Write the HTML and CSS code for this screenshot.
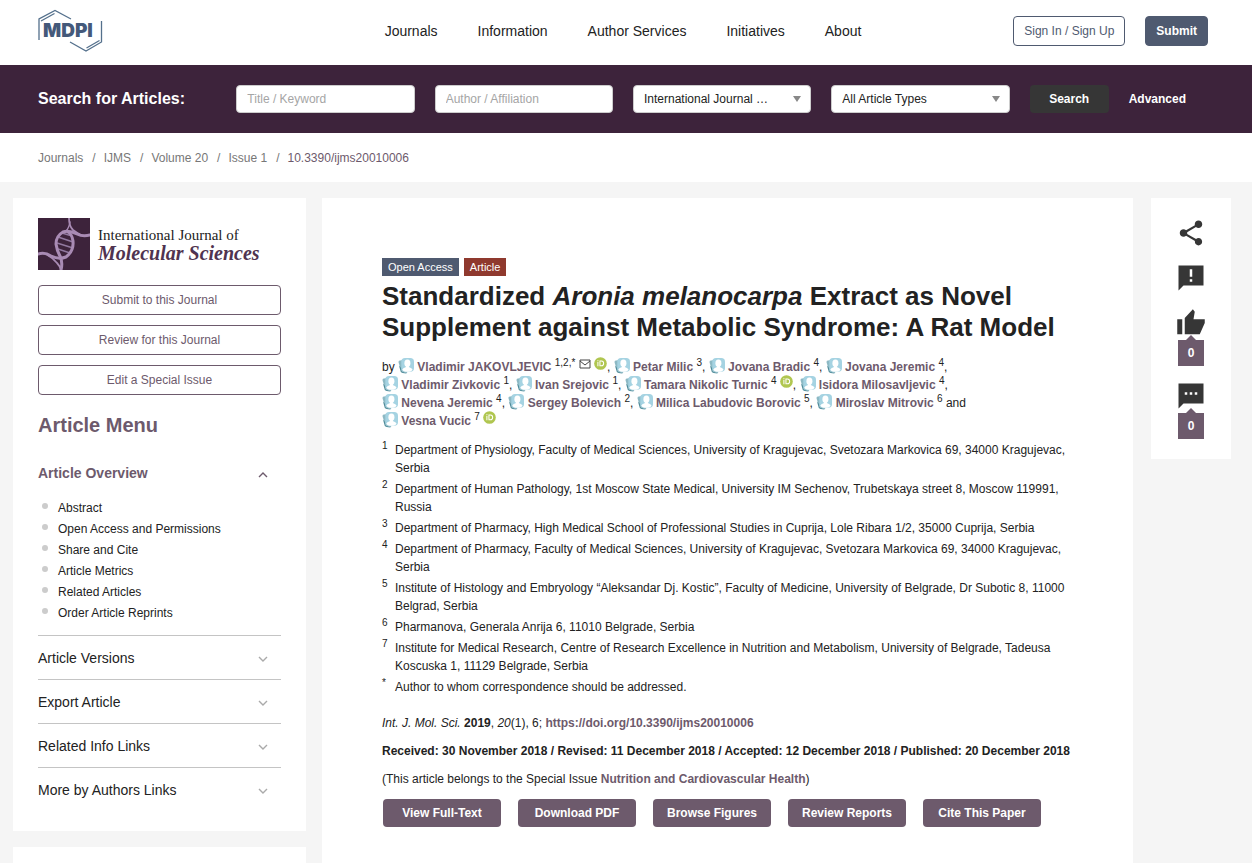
FILE: index.html
```html
<!DOCTYPE html>
<html lang="en">
<head>
    <meta charset="UTF-8">
    <meta name="viewport" content="width=device-width, initial-scale=1.0">
    <title>IJMS | Standardized Aronia melanocarpa Extract as Novel Supplement against Metabolic Syndrome: A Rat Model</title>
    <link rel="stylesheet" href="styles.css">
</head>
<body>
    <!-- Shared icons -->
    <svg class="sprite" aria-hidden="true">
        <symbol id="profile" viewBox="0 0 17 17">
            <path d="M1 3 Q0 4 1 6 L3 12 Q4 15 9 16.500 L10 15 L5 11 V2 Z" fill="#8db9c4"/>
            <path d="M1 8 L3 10 L4 14 L9 16.500 Q4 16.500 3 15 Z" fill="#4f8c9a"/>
            <rect x="3.500" y="0" width="13.500" height="14.500" rx="4" fill="#a5d3e2"/>
            <ellipse cx="10" cy="5.500" rx="3.200" ry="4" fill="#fff"/>
            <path d="M4.500 12.500 Q5 10.500 8.500 9.500 V8 H11.500 V9.500 Q15 10.500 15.500 12.500 Q14 14.500 12 14.500 H8 Q6 14.500 4.500 12.500 Z" fill="#fff"/>
        </symbol>
        <symbol id="orcid" viewBox="0 0 14 14">
            <circle cx="7" cy="7" r="6.8" fill="#b0c650"/>
            <path d="M4.2 5.2 V10 M4.2 3.4 V4.3" stroke="#fff" stroke-width="1.1"/>
            <path d="M6.4 4.2 H8 Q10.4 4.4 10.4 6.9 Q10.4 9.3 8 9.5 H6.4 Z" fill="none" stroke="#fff" stroke-width="1.1"/>
        </symbol>
        <symbol id="chevron" viewBox="0 0 10 10">
            <path d="M1 3 L5 7 L9 3" fill="none" stroke="currentColor" stroke-width="1.4"/>
        </symbol>
    </svg>

    <header class="top-bar">
        <a href="#" class="logo" aria-label="MDPI">
            <svg width="66" height="44" viewBox="0 0 66 44">
                <g fill="none" stroke="#54708c" stroke-width="1.3">
                    <path d="M1 31 V10 L17 1.500 L33 10"/>
                    <path d="M3 12 L16.500 4.500"/>
                    <path d="M63.500 12 V33 L48 42 L32 33"/>
                    <path d="M61.500 31.500 L48.500 39"/>
                </g>
                <text x="5" y="28" class="logo-text">MDPI</text>
            </svg>
        </a>
        <nav>
            <a href="#">Journals</a>
            <a href="#">Information</a>
            <a href="#">Author Services</a>
            <a href="#">Initiatives</a>
            <a href="#">About</a>
        </nav>
        <div class="account">
            <a href="#" class="button outline">Sign In / Sign Up</a>
            <a href="#" class="button filled">Submit</a>
        </div>
    </header>

    <form class="search-bar" action="#">
        <div class="search-title">Search for Articles:</div>
        <input type="text" placeholder="Title / Keyword" aria-label="Title / Keyword">
        <input type="text" placeholder="Author / Affiliation" aria-label="Author / Affiliation">
        <div class="select-box">
            <select aria-label="Journal">
                <option>International Journal …</option>
            </select>
        </div>
        <div class="select-box">
            <select aria-label="Article type">
                <option>All Article Types</option>
            </select>
        </div>
        <div class="search-actions">
            <button type="submit">Search</button>
            <a href="#">Advanced</a>
        </div>
    </form>

    <div class="breadcrumb">
        <a href="#">Journals</a><span>/</span><a href="#">IJMS</a><span>/</span><a href="#">Volume 20</a><span>/</span><a href="#">Issue 1</a><span>/</span><a href="#" class="current">10.3390/ijms20010006</a>
    </div>

    <main>
        <aside class="sidebar">
            <div class="card menu-card">
                <a href="#" class="journal-logo">
                    <svg width="52" height="52" viewBox="0 0 52 52" aria-hidden="true">
                        <rect width="52" height="52" fill="#3d233b"/>
                        <g fill="none" stroke="#9279a0" stroke-width="1.5">
                            <path d="M24 15 L34 18 M20 19 L35 24 M19 25 L35 30 M20 31 L32 35"/>
                        </g>
                        <g fill="none" stroke="#a98bb4" stroke-linecap="round">
                            <path d="M0 36 Q7 34 13 38 Q21 42 28 39 Q36 33 35 23 Q34 16 30 14" stroke-width="3"/>
                            <path d="M52 17 Q45 19 39 16 Q31 12 25 14 Q18 18 18 26 Q19 33 22 38 Q25 44 23 52" stroke-width="3"/>
                            <path d="M31 0 Q31 8 35 12 Q39 15 43 17" stroke-width="1.800"/>
                            <path d="M32 4 Q31 10 28 13" stroke-width="1.500"/>
                            <path d="M8 36 Q15 40 19 45 Q22 48 23 52" stroke-width="1.800"/>
                        </g>
                    </svg>
                    <span class="journal-name">International Journal of<br><strong>Molecular Sciences</strong></span>
                </a>
                <a href="#" class="button">Submit to this Journal</a>
                <a href="#" class="button">Review for this Journal</a>
                <a href="#" class="button">Edit a Special Issue</a>

                <h2>Article Menu</h2>

                <button type="button" class="menu-toggle open">Article Overview <svg><use href="#chevron"/></svg></button>
                <ul class="menu-list">
                    <li><a href="#">Abstract</a></li>
                    <li><a href="#">Open Access and Permissions</a></li>
                    <li><a href="#">Share and Cite</a></li>
                    <li><a href="#">Article Metrics</a></li>
                    <li><a href="#">Related Articles</a></li>
                    <li><a href="#">Order Article Reprints</a></li>
                </ul>
                <button type="button" class="menu-toggle">Article Versions <svg><use href="#chevron"/></svg></button>
                <button type="button" class="menu-toggle">Export Article <svg><use href="#chevron"/></svg></button>
                <button type="button" class="menu-toggle">Related Info Links <svg><use href="#chevron"/></svg></button>
                <button type="button" class="menu-toggle">More by Authors Links <svg><use href="#chevron"/></svg></button>
            </div>
            <div class="card next-card"></div>
        </aside>

        <article class="card">
            <div class="labels">
                <span class="label">Open Access</span>
                <span class="label type">Article</span>
            </div>
            <h1>Standardized <i>Aronia melanocarpa</i> Extract as Novel Supplement against Metabolic Syndrome: A Rat Model</h1>

            <div class="authors">
                by
                <span class="author"><svg class="profile"><use href="#profile"/></svg> <a href="#">Vladimir JAKOVLJEVIC</a> <sup>1,2,*</sup> <svg class="mail" viewBox="0 0 12 10"><path d="M1 1 H11 V9 H1 Z M1 2 L6 6 L11 2" fill="none" stroke="#444"/></svg> <svg class="orcid"><use href="#orcid"/></svg>,</span>
                <span class="author"><svg class="profile"><use href="#profile"/></svg> <a href="#">Petar Milic</a> <sup>3</sup>,</span>
                <span class="author"><svg class="profile"><use href="#profile"/></svg> <a href="#">Jovana Bradic</a> <sup>4</sup>,</span>
                <span class="author"><svg class="profile"><use href="#profile"/></svg> <a href="#">Jovana Jeremic</a> <sup>4</sup>,</span>
                <span class="author"><svg class="profile"><use href="#profile"/></svg> <a href="#">Vladimir Zivkovic</a> <sup>1</sup>,</span>
                <span class="author"><svg class="profile"><use href="#profile"/></svg> <a href="#">Ivan Srejovic</a> <sup>1</sup>,</span>
                <span class="author"><svg class="profile"><use href="#profile"/></svg> <a href="#">Tamara Nikolic Turnic</a> <sup>4</sup> <svg class="orcid"><use href="#orcid"/></svg>,</span>
                <span class="author"><svg class="profile"><use href="#profile"/></svg> <a href="#">Isidora Milosavljevic</a> <sup>4</sup>,</span>
                <span class="author"><svg class="profile"><use href="#profile"/></svg> <a href="#">Nevena Jeremic</a> <sup>4</sup>,</span>
                <span class="author"><svg class="profile"><use href="#profile"/></svg> <a href="#">Sergey Bolevich</a> <sup>2</sup>,</span>
                <span class="author"><svg class="profile"><use href="#profile"/></svg> <a href="#">Milica Labudovic Borovic</a> <sup>5</sup>,</span>
                <span class="author"><svg class="profile"><use href="#profile"/></svg> <a href="#">Miroslav Mitrovic</a> <sup>6</sup> and</span>
                <span class="author"><svg class="profile"><use href="#profile"/></svg> <a href="#">Vesna Vucic</a> <sup>7</sup> <svg class="orcid"><use href="#orcid"/></svg></span>
            </div>

            <div class="affiliations">
                <div class="affiliation"><sup>1</sup><span>Department of Physiology, Faculty of Medical Sciences, University of Kragujevac, Svetozara Markovica 69, 34000 Kragujevac, Serbia</span></div>
                <div class="affiliation"><sup>2</sup><span>Department of Human Pathology, 1st Moscow State Medical, University IM Sechenov, Trubetskaya street 8, Moscow 119991, Russia</span></div>
                <div class="affiliation"><sup>3</sup><span>Department of Pharmacy, High Medical School of Professional Studies in Cuprija, Lole Ribara 1/2, 35000 Cuprija, Serbia</span></div>
                <div class="affiliation"><sup>4</sup><span>Department of Pharmacy, Faculty of Medical Sciences, University of Kragujevac, Svetozara Markovica 69, 34000 Kragujevac, Serbia</span></div>
                <div class="affiliation"><sup>5</sup><span>Institute of Histology and Embryology “Aleksandar Dj. Kostic”, Faculty of Medicine, University of Belgrade, Dr Subotic 8, 11000 Belgrad, Serbia</span></div>
                <div class="affiliation"><sup>6</sup><span>Pharmanova, Generala Anrija 6, 11010 Belgrade, Serbia</span></div>
                <div class="affiliation"><sup>7</sup><span>Institute for Medical Research, Centre of Research Excellence in Nutrition and Metabolism, University of Belgrade, Tadeusa Koscuska 1, 11129 Belgrade, Serbia</span></div>
                <div class="affiliation"><sup>*</sup><span>Author to whom correspondence should be addressed.</span></div>
            </div>

            <p><i>Int. J. Mol. Sci.</i> <b>2019</b>, <i>20</i>(1), 6; <a href="#">https://doi.org/10.3390/ijms20010006</a></p>
            <p><b>Received: 30 November 2018 / Revised: 11 December 2018 / Accepted: 12 December 2018 / Published: 20 December 2018</b></p>
            <p>(This article belongs to the Special Issue <a href="#">Nutrition and Cardiovascular Health</a>)</p>

            <div class="article-buttons">
                <a href="#">View Full-Text</a>
                <a href="#">Download PDF</a>
                <a href="#">Browse Figures</a>
                <a href="#">Review Reports</a>
                <a href="#">Cite This Paper</a>
            </div>
        </article>

        <aside class="card tools">
            <a href="#" aria-label="Share">
                <svg viewBox="0 0 24 24"><path d="M18 16.080c-.76 0-1.440.3-1.960.77L8.910 12.700c.05-.23.09-.46.09-.7s-.04-.47-.09-.7l7.050-4.110c.54.5 1.250.81 2.040.81 1.660 0 3-1.340 3-3s-1.340-3-3-3-3 1.340-3 3c0 .24.04.47.09.7L8.040 9.810C7.500 9.310 6.790 9 6 9c-1.660 0-3 1.340-3 3s1.340 3 3 3c.79 0 1.500-.31 2.040-.81l7.120 4.160c-.05.21-.08.43-.08.65 0 1.610 1.310 2.920 2.920 2.920s2.920-1.310 2.920-2.920-1.310-2.920-2.920-2.920z"/></svg>
            </a>
            <a href="#" aria-label="Feedback">
                <svg viewBox="0 0 24 24"><path d="M2 2 H22 V18 H6 L2 22 Z"/><path d="M11 5 H13 V11 H11 Z M11 13 H13 V15 H11 Z" fill="#fff"/></svg>
            </a>
            <a href="#" aria-label="Endorse">
                <svg viewBox="0 0 24 24"><path d="M1 21h4V9H1v12zM23 9H14l1-6L13.500 1 7 8V21H19L23 12z"/></svg>
                <span class="count">0</span>
            </a>
            <a href="#" aria-label="Comment">
                <svg viewBox="0 0 24 24"><path d="M2 2 H22 V18 H6 L2 22 Z"/><path d="M7 9 H9 V11 H7 Z M11 9 H13 V11 H11 Z M15 9 H17 V11 H15 Z" fill="#fff"/></svg>
                <span class="count">0</span>
            </a>
        </aside>
    </main>
</body>
</html>
```
FILE: styles.css
```css
/* General Styles */
* {
    box-sizing: border-box;
}

body {
    margin: 0;
    min-height: 100vh;
    display: flex;
    flex-direction: column;
    background-color: #f5f5f5;
    color: #222;
    font-family: Arial, "Liberation Sans", sans-serif;
    font-size: 12px;
    line-height: 18px;
}

a {
    color: inherit;
    text-decoration: none;
}

button, input, select {
    font-family: inherit;
    font-size: 12px;
}

.sprite {
    display: none;
}

.card {
    background-color: #fff;
}

.button {
    display: block;
    height: 30px;
    padding: 0 10px;
    border: 1px solid #6d5a6c;
    border-radius: 4px;
    color: #6d5a6c;
    line-height: 28px;
    text-align: center;
}

.button.outline {
    border-color: #4f5a70;
    color: #4f5a70;
}

.button.filled {
    border-color: #4f5a70;
    background-color: #4f5a70;
    color: #fff;
    font-weight: bold;
}

/* Header */
.top-bar {
    display: grid;
    grid-template-columns: 1fr auto 1fr;
    align-items: center;
    height: 65px;
    padding: 0 44px 3px 38px;
    background-color: #fff;
}

.logo svg {
    display: block;
}

.logo-text {
    font-family: Inter, "Open Sans", sans-serif;
    font-size: 19px;
    font-weight: 900;
    fill: #44597a;
}

nav {
    display: flex;
    gap: 40px;
    font-size: 14px;
}

.account {
    display: flex;
    justify-content: flex-end;
    gap: 20px;
}

/* Search */
.search-bar {
    display: grid;
    grid-template-columns: repeat(6, minmax(0, 1fr));
    gap: 20px;
    padding: 20px 44px 20px 38px;
    background-color: #3d233b;
    color: #fff;
    line-height: 28px;
}

.search-title {
    font-size: 16px;
    font-weight: bold;
    white-space: nowrap;
}

.search-bar input, .search-bar select {
    width: 100%;
    height: 28px;
    padding: 0 10px;
    border: 1px solid #ccc;
    border-radius: 4px;
    background-color: #fff;
    color: #222;
}

.search-bar input::placeholder {
    color: #a5a5a5;
}

.search-bar select {
    display: block;
    appearance: none;
}

.select-box {
    position: relative;
}

.select-box::after {
    content: "";
    position: absolute;
    top: 11px;
    right: 10px;
    border: 4px solid transparent;
    border-top: 6px solid #888;
    border-bottom: none;
    pointer-events: none;
}

.search-actions {
    display: flex;
    gap: 20px;
    font-weight: bold;
}

.search-actions button {
    width: 79px;
    height: 28px;
    border: none;
    border-radius: 4px;
    background-color: #363636;
    color: #fff;
    font-weight: bold;
}

.breadcrumb {
    padding: 16px 38px 15px;
    background-color: #fff;
    color: #777;
}

.breadcrumb span {
    margin: 0 8px 0 9px;
}

.breadcrumb .current {
    color: #6d5a6c;
}

/* Page columns */
main {
    display: flex;
    flex: 1;
    gap: 16px;
    padding: 16px 21px 0 13px;
}

.sidebar {
    display: flex;
    flex-direction: column;
    gap: 16px;
    width: 293px;
}

.next-card {
    flex: 1;
    min-height: 16px;
}

.menu-card {
    padding: 20px 25px;
}

.menu-card .button {
    margin-bottom: 10px;
}

.journal-logo {
    display: flex;
    gap: 8px;
    height: 52px;
    margin-bottom: 15px;
}

.journal-name {
    padding-top: 8px;
    font-family: "Liberation Serif", "Times New Roman", serif;
    font-size: 15px;
    white-space: nowrap;
}

.journal-name strong {
    color: #4f3350;
    font-size: 20px;
    font-style: italic;
}

h2 {
    margin: 18px 0 14px;
    color: #6d5a6c;
    font-size: 20px;
    line-height: 24px;
}

.menu-toggle {
    display: flex;
    justify-content: space-between;
    align-items: center;
    width: 100%;
    height: 44px;
    padding: 0 13px 0 0;
    border: none;
    border-top: 1px solid #c4c4c4;
    background: none;
    color: #222;
    font-size: 14px;
}

.menu-toggle svg {
    width: 10px;
    height: 10px;
    margin-top: 3px;
    color: #aaa;
}

.menu-toggle.open {
    border-top: none;
    color: #6d5a6c;
    font-weight: bold;
}

.menu-toggle.open svg {
    color: #6d5a6c;
    transform: rotate(180deg);
}

.menu-list {
    margin: 0;
    padding: 3px 0 11px;
    list-style: none;
    line-height: 21px;
}

.menu-list li {
    display: flex;
    gap: 10px;
    padding-left: 4px;
}

.menu-list li::before {
    content: "";
    width: 6px;
    height: 6px;
    margin-top: 5px;
    border-radius: 50%;
    background-color: #ccc;
}

/* Article */
article {
    flex: 1;
    padding: 60px 60px 36px;
}

article p {
    margin: 0 0 10px;
}

article p a, .author a {
    color: #6d5a6c;
    font-weight: bold;
}

.labels {
    display: flex;
    gap: 5px;
}

.label {
    padding: 0 6px;
    background-color: #4f5a70;
    color: #fff;
    font-size: 11px;
}

.label.type {
    background-color: #8f392e;
}

h1 {
    margin: 5px 0 15px;
    font-size: 26px;
    line-height: 31px;
}

sup {
    font-size: 10px;
    line-height: 0;
}

.authors {
    max-width: 600px;
    margin-bottom: 11px;
}

.author {
    white-space: nowrap;
}

.author svg {
    margin-top: -4px;
}

.profile {
    width: 16px;
    height: 16px;
    vertical-align: -3px;
}

.profile, .orcid {
    overflow: visible;
}

.mail {
    width: 12px;
    height: 10px;
    vertical-align: 2px;
}

.orcid {
    width: 13px;
    height: 13px;
    vertical-align: 1px;
}

.affiliations {
    margin-bottom: 18px;
}

.affiliation {
    display: flex;
    margin-bottom: 3px;
}

.affiliation sup {
    width: 13px;
    flex-shrink: 0;
    line-height: 10px;
}

.article-buttons {
    display: flex;
    flex-wrap: wrap;
    gap: 17px;
    margin-top: 11px;
    padding-left: 1px;
}

.article-buttons a {
    width: 118px;
    border-radius: 4px;
    background-color: #6d5a6c;
    color: #fff;
    font-weight: bold;
    line-height: 28px;
    text-align: center;
}

/* Article tools */
.tools {
    display: flex;
    flex-direction: column;
    align-items: center;
    align-self: flex-start;
    gap: 15px;
    width: 80px;
    margin-left: 2px;
    padding: 20px 0;
}

.tools svg {
    display: block;
    width: 30px;
    height: 30px;
    fill: #363636;
}

.count {
    position: relative;
    display: block;
    width: 26px;
    margin: 2px auto 0;
    background-color: #6d5a6c;
    color: #fff;
    font-weight: bold;
    line-height: 26px;
    text-align: center;
}

.count::before {
    content: "";
    position: absolute;
    top: -5px;
    left: 8px;
    border: 5px solid transparent;
    border-top: none;
    border-bottom-color: #6d5a6c;
}
```
